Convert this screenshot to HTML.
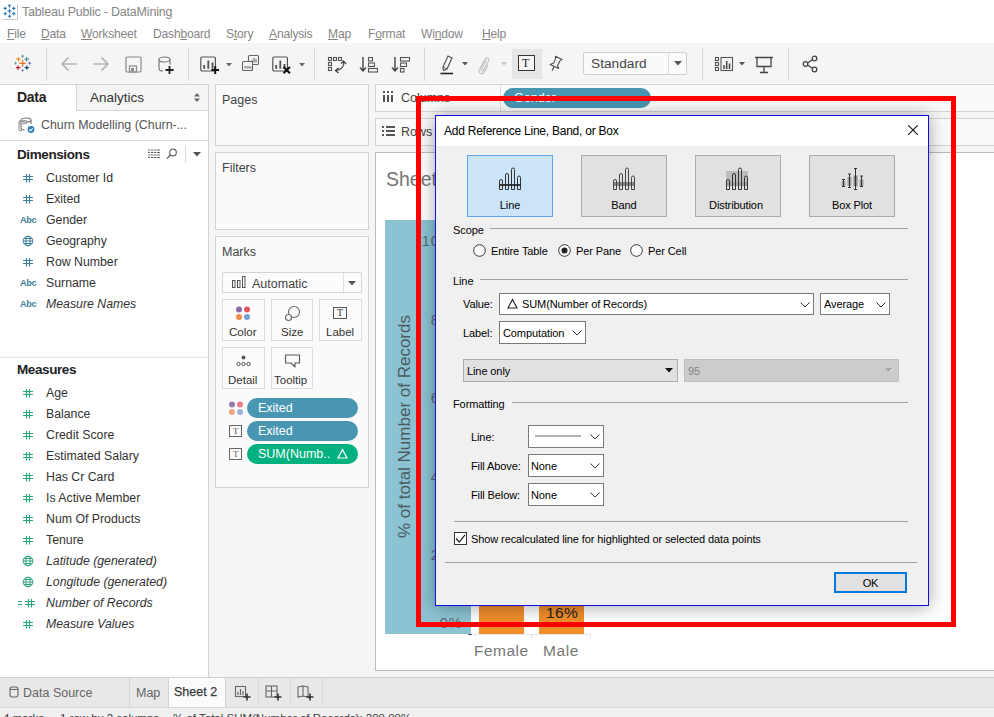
<!DOCTYPE html>
<html><head><meta charset="utf-8">
<style>
*{box-sizing:border-box;margin:0;padding:0}
html,body{width:994px;height:717px;overflow:hidden;background:#fff}
body{font-family:"Liberation Sans",sans-serif;font-size:12px;color:#333;position:relative}
.a{position:absolute}
.t{position:absolute;white-space:nowrap;line-height:1}
.box{position:absolute;background:#fafafa;border:1px solid #d3d3d3}
.menu span{position:absolute;top:28px;font-size:12.1px;color:#868686;line-height:1;letter-spacing:-0.2px}
.menu u{text-decoration:underline;text-underline-offset:1px}
.fld{position:absolute;left:46px;font-size:12.3px;color:#333;line-height:1;white-space:nowrap}
.fld.i{font-style:italic}
.abc{position:absolute;left:20px;font-size:9.2px;font-weight:bold;line-height:1;letter-spacing:-0.35px}
.sep{position:absolute;width:1px;background:#d8d8d8}
.d{position:absolute;white-space:nowrap;line-height:1;font-size:11px;letter-spacing:-0.1px;color:#000}
.cmb{position:absolute;background:#fff;border:1px solid #7a7a7a}
.hr{position:absolute;height:1px;background:#a0a0a0}
.tb{position:absolute;border:1px solid #adadad;background:#e1e1e1}
</style></head><body>
<!-- title bar -->
<svg class="a" style="left:2px;top:3px" width="16" height="17" viewBox="0 0 16 17"><rect x="0" y="0" width="15" height="16" fill="#fff"/><path d="M15.500 1v15.500H1" fill="none" stroke="#c8c8c8" stroke-width="1"/><g fill="none"><path d="M7.5 5.8v4.4M5.3 8h4.4" stroke="#2a78b4" stroke-width="1.2"/><path d="M7.5 1.1999999999999997v3.2M5.9 2.8h3.2" stroke="#2a78b4" stroke-width="1.1"/><path d="M7.5 11.6v3.2M5.9 13.2h3.2" stroke="#2a78b4" stroke-width="1.1"/><path d="M3.2 3.8000000000000003v3.2M1.6 5.4h3.2" stroke="#2a78b4" stroke-width="1.1"/><path d="M11.8 3.8000000000000003v3.2M10.200000000000001 5.4h3.2" stroke="#2a78b4" stroke-width="1.1"/><path d="M3.2 9.0v3.2M1.6 10.6h3.2" stroke="#2a78b4" stroke-width="1.1"/><path d="M11.8 9.0v3.2M10.200000000000001 10.6h3.2" stroke="#2a78b4" stroke-width="1.1"/></g></svg>
<div class="t" style="left:22px;top:6px;font-size:12.5px;color:#858585;letter-spacing:-0.2px">Tableau Public - DataMining</div>
<div class="menu">
<span style="left:7px"><u>F</u>ile</span><span style="left:41px"><u>D</u>ata</span><span style="left:81px"><u>W</u>orksheet</span><span style="left:153px">Dash<u>b</u>oard</span><span style="left:226px">S<u>t</u>ory</span><span style="left:269px"><u>A</u>nalysis</span><span style="left:328px"><u>M</u>ap</span><span style="left:368px">F<u>o</u>rmat</span><span style="left:421px">Wi<u>n</u>dow</span><span style="left:482px"><u>H</u>elp</span>
</div>
<!-- toolbar -->
<div class="a" id="toolbar" style="left:0;top:43px;width:994px;height:41px;background:#f5f5f5"></div>
<div class="sep" style="left:46px;top:47px;height:34px"></div>
<div class="sep" style="left:188px;top:47px;height:34px"></div>
<div class="sep" style="left:314px;top:47px;height:34px"></div>
<div class="sep" style="left:424px;top:47px;height:34px"></div>
<div class="sep" style="left:702px;top:47px;height:34px"></div>
<div class="sep" style="left:788px;top:47px;height:34px"></div>
<!-- tableau logo -->
<svg class="a" style="left:13px;top:54px" width="19" height="19" viewBox="0 0 19 19"><g fill="none"><path d="M9.6 6.1000000000000005v6.6M6.3 9.4h6.6" stroke="#e8762d" stroke-width="1.4"/><path d="M5.4 3.0v4.4M3.2 5.2h4.4" stroke="#eb912c" stroke-width="1.2"/><path d="M13.6 3.0v4.4M11.399999999999999 5.2h4.4" stroke="#59879b" stroke-width="1.2"/><path d="M5.1 11.399999999999999v4.4M2.8999999999999995 13.6h4.4" stroke="#c72037" stroke-width="1.2"/><path d="M13.8 11.399999999999999v4.4M11.600000000000001 13.6h4.4" stroke="#1f457e" stroke-width="1.2"/><path d="M9.6 0.7000000000000002v3.0M8.1 2.2h3.0" stroke="#5b9aa8" stroke-width="1"/><path d="M9.6 14.899999999999999v3.0M8.1 16.4h3.0" stroke="#8a8fc0" stroke-width="1"/><path d="M2.5 7.699999999999999v3.0M1.0 9.2h3.0" stroke="#7a9fb0" stroke-width="1"/><path d="M16.6 7.699999999999999v3.0M15.100000000000001 9.2h3.0" stroke="#6a6fae" stroke-width="1"/></g></svg>
<!-- back/forward -->
<svg class="a" style="left:60px;top:56px" width="18" height="16" viewBox="0 0 18 16"><path d="M16.800 8H2M8.500 1.500L2 8l6.500 6.500" stroke="#b4b4b4" stroke-width="1.700" fill="none"/></svg>
<svg class="a" style="left:92px;top:56px" width="18" height="16" viewBox="0 0 18 16"><path d="M1.200 8H16M9.500 1.500L16 8l-6.500 6.500" stroke="#b4b4b4" stroke-width="1.700" fill="none"/></svg>
<!-- save -->
<svg class="a" style="left:125px;top:56px" width="17" height="17" viewBox="0 0 17 17"><rect x="1" y="1" width="15" height="15" rx="1.200" fill="none" stroke="#8a8a8a" stroke-width="1.200"/><rect x="4.500" y="10" width="7" height="6" fill="none" stroke="#8a8a8a" stroke-width="1.200"/><rect x="6" y="12" width="3" height="3" fill="#8a8a8a"/></svg>
<!-- datasource add -->
<svg class="a" style="left:157px;top:56px" width="18" height="20" viewBox="0 0 18 20"><g fill="none" stroke="#7a7a7a" stroke-width="1.200"><ellipse cx="7.500" cy="3.500" rx="5.500" ry="2.500"/><path d="M2 3.500v9c0 1.500 2 2.500 4 2.500M13 3.500v5"/></g><path d="M12.500 10v8M8.500 14h8" stroke="#222" stroke-width="1.800" fill="none"/></svg>
<!-- new worksheet -->
<svg class="a" style="left:200px;top:55px" width="22" height="20" viewBox="0 0 22 20"><rect x="0.800" y="2" width="14.600" height="14" rx="1.200" fill="none" stroke="#555" stroke-width="1.200"/><path d="M4.200 13.800V10M8.300 13.800V5.500M12.500 13.800V7.500" stroke="#555" stroke-width="1.900" fill="none"/><path d="M15.200 11.300v7.600M11.400 15.100h7.600" stroke="#111" stroke-width="2" fill="none"/></svg>
<svg class="a" style="left:226px;top:63px" width="6" height="4" viewBox="0 0 6 4"><path d="M0 0h6L3 3.500z" fill="#6a6a6a"/></svg>
<!-- duplicate -->
<svg class="a" style="left:241px;top:54px" width="20" height="20" viewBox="0 0 20 20"><rect x="7.500" y="1.500" width="10" height="9" rx="1" fill="#f5f5f5" stroke="#666" stroke-width="1.100"/><path d="M11 8.500V6M13 8.500V4M15 8.500V5" stroke="#666" stroke-width="1.100"/><rect x="1.500" y="7.500" width="10" height="9" rx="1" fill="#f5f5f5" stroke="#666" stroke-width="1.100"/><path d="M4 14.500v-2.500M6 14.500v-2.500M8 14.500v-2.500M9.800 14.500v-2" stroke="#666" stroke-width="1"/></svg>
<!-- clear -->
<svg class="a" style="left:272px;top:55px" width="22" height="20" viewBox="0 0 22 20"><rect x="0.800" y="2" width="14.600" height="14" rx="1.200" fill="none" stroke="#555" stroke-width="1.200"/><path d="M4.200 13.800V10M8.300 13.800V5.500M12.500 13.800V9" stroke="#555" stroke-width="1.900" fill="none"/><path d="M11.500 11.900l6.400 6.400M17.900 11.900l-6.400 6.400" stroke="#111" stroke-width="2.100" fill="none"/></svg>
<svg class="a" style="left:299px;top:63px" width="6" height="4" viewBox="0 0 6 4"><path d="M0 0h6L3 3.500z" fill="#6a6a6a"/></svg>
<!-- swap -->
<svg class="a" style="left:327px;top:55px" width="20" height="20" viewBox="0 0 20 20"><g fill="none" stroke="#555" stroke-width="1.100"><rect x="1.500" y="2.500" width="3" height="3"/><rect x="6.500" y="2.500" width="3" height="3"/><rect x="11.500" y="2.500" width="3" height="3"/><rect x="1.500" y="7.500" width="3" height="3"/><rect x="1.500" y="12.500" width="3" height="3"/><path d="M16.500 7c1 4-2 8-7.500 8.500" stroke-width="1.300"/></g><path d="M14 8.500l2.500-2.500 2.500 3M11.500 13l-3 2.500 3 2.500" fill="none" stroke="#444" stroke-width="1.300"/></svg>
<!-- sort asc -->
<svg class="a" style="left:359px;top:55px" width="20" height="20" viewBox="0 0 20 20"><path d="M4 2v14M1 12.500l3 3.500 3-3.500" fill="none" stroke="#444" stroke-width="1.400"/><g fill="none" stroke="#555" stroke-width="1.100"><rect x="9.500" y="2.500" width="4" height="3.500"/><rect x="9.500" y="8" width="6" height="3.500"/><rect x="9.500" y="13.500" width="9" height="3.500"/></g></svg>
<!-- sort desc -->
<svg class="a" style="left:391px;top:55px" width="20" height="20" viewBox="0 0 20 20"><path d="M4 2v14M1 12.500l3 3.500 3-3.500" fill="none" stroke="#444" stroke-width="1.400"/><g fill="none" stroke="#555" stroke-width="1.100"><rect x="9.500" y="2.500" width="9" height="3.500"/><rect x="9.500" y="8" width="6" height="3.500"/><rect x="9.500" y="13.500" width="3.500" height="3.500"/></g></svg>
<!-- highlighter -->
<svg class="a" style="left:439px;top:54px" width="16" height="22" viewBox="0 0 16 22"><path d="M9 2l4 2-5 11-3.500 1.500-0.500-3.500z" fill="none" stroke="#555" stroke-width="1.200"/><path d="M4.500 13l3.500 2" stroke="#555" stroke-width="1" fill="none"/><path d="M1.500 19.500h12.500" stroke="#222" stroke-width="1.600"/></svg>
<svg class="a" style="left:462px;top:62px" width="6" height="4" viewBox="0 0 6 4"><path d="M0 0h6L3 3.500z" fill="#555"/></svg>
<!-- paperclip -->
<svg class="a" style="left:476px;top:55px" width="16" height="20" viewBox="0 0 16 20"><path d="M10.500 5L5.500 14c-.8 1.500 1.200 2.600 2 1.200L12.500 6c1.300-2.400-2-4.200-3.300-1.900L3.500 14.500c-1.800 3.400 2.800 5.800 4.600 2.600L12 10" fill="none" stroke="#c4c4c4" stroke-width="1.200"/></svg>
<svg class="a" style="left:501px;top:62px" width="6" height="4" viewBox="0 0 6 4"><path d="M0 0h6L3 3.500z" fill="#c4c4c4"/></svg>
<!-- T label button -->
<div class="a" style="left:512px;top:49px;width:30px;height:30px;background:#e6e6e6"></div>
<div class="a" style="left:518px;top:55px;width:17px;height:16px;border:1.500px solid #333;background:#f5f5f5"></div>
<div class="t" style="left:522px;top:57px;font-family:'Liberation Serif',serif;font-size:12px;color:#222">T</div>
<!-- pin -->
<svg class="a" style="left:549px;top:54px" width="16" height="20" viewBox="0 0 16 20"><path d="M6.400 2.300L13.100 5.400L10.900 6.900L8.600 11.600L9.600 14.500L1.200 10.400L4.700 9.100L6.600 4.600z" fill="none" stroke="#4a4a4a" stroke-width="1.100" stroke-linejoin="round"/><path d="M5.100 12.400L3.300 16.500" stroke="#4a4a4a" stroke-width="1.300"/></svg>
<!-- Standard dropdown -->
<div class="a" style="left:583px;top:52px;width:104px;height:23px;background:#fafafa;border:1px solid #d0d0d0;border-radius:2px"></div>
<div class="a" style="left:668px;top:53px;width:1px;height:21px;background:#dcdcdc"></div>
<div class="t" style="left:591px;top:57px;font-size:13.7px;color:#444">Standard</div>
<svg class="a" style="left:674px;top:61px" width="8" height="5" viewBox="0 0 8 5"><path d="M0 0h8L4 4.500z" fill="#555"/></svg>
<!-- show me cards -->
<svg class="a" style="left:714px;top:56px" width="20" height="18" viewBox="0 0 20 18"><g fill="none" stroke="#555" stroke-width="1.100"><rect x="1.500" y="1.500" width="3" height="3"/><rect x="1.500" y="6.500" width="3" height="3"/><rect x="1.500" y="11.500" width="3" height="3"/><rect x="7" y="1.500" width="11.500" height="13"/></g><path d="M10 13V9M12.700 13V5M15.500 13V7.500" stroke="#444" stroke-width="1.500"/></svg>
<svg class="a" style="left:739px;top:62px" width="6" height="4" viewBox="0 0 6 4"><path d="M0 0h6L3 3.500z" fill="#555"/></svg>
<!-- presentation -->
<svg class="a" style="left:754px;top:55px" width="20" height="20" viewBox="0 0 20 20"><path d="M1 2.500h18M3 2.500v9h14v-9M10 11.500v5.500M6 17.500h8" fill="none" stroke="#444" stroke-width="1.300"/></svg>
<!-- share -->
<svg class="a" style="left:802px;top:55px" width="18" height="18" viewBox="0 0 18 18"><g fill="none" stroke="#444" stroke-width="1.300"><circle cx="12.500" cy="3.500" r="2.300"/><circle cx="3.500" cy="9" r="2.300"/><circle cx="12.500" cy="14.500" r="2.300"/><path d="M5.500 8l5-3.300M5.500 10l5 3.300"/></g></svg>
<!-- main bg -->
<div class="a" style="left:0;top:84px;width:994px;height:593px;background:#f5f5f5"></div>
<!-- left pane -->
<div class="a" id="leftpane" style="left:0;top:84px;width:209px;height:593px;background:#fff;border-right:1px solid #d3d3d3;border-top:1px solid #d3d3d3"></div>
<div class="a" style="left:76px;top:84px;width:132px;height:27px;background:#f5f5f5;border-left:1px solid #d3d3d3;border-bottom:1px solid #d3d3d3;border-top:1px solid #d3d3d3"></div>
<div class="t" style="left:17px;top:90px;font-size:14px;color:#222;font-weight:bold;letter-spacing:-0.3px">Data</div>
<div class="t" style="left:90px;top:90.7px;font-size:13.5px;color:#333">Analytics</div>
<svg class="a" style="left:194px;top:93px" width="6" height="9" viewBox="0 0 6 9"><path d="M0 3.500L3 0l3 3.500zM0 5.500L3 9l3-3.500z" fill="#666"/></svg>
<div class="a" style="left:0;top:140px;width:208px;height:1px;background:#dcdcdc"></div>
<!-- datasource icon -->
<svg class="a" style="left:18px;top:117px" width="18" height="17" viewBox="0 0 18 17"><g fill="none" stroke="#777" stroke-width="1.100"><ellipse cx="8" cy="3" rx="5" ry="2"/><path d="M3 3v8c0 1 1.500 1.800 3.500 2M13 3v4"/><ellipse cx="5" cy="5" rx="4" ry="1.800" stroke="#999"/><path d="M1 5v7c0 1 1.500 1.800 3 2" stroke="#999"/></g><circle cx="13" cy="12.500" r="3.400" fill="#2f7fb5"/><path d="M11.300 12.500l1.300 1.300 2.100-2.500" stroke="#fff" stroke-width="1.100" fill="none"/></svg>
<div class="t" style="left:41px;top:119px;font-size:12.4px;color:#555">Churn Modelling (Churn-...</div>
<div class="t" style="left:17px;top:147.7px;font-size:13.5px;color:#222;font-weight:bold;letter-spacing:-0.4px">Dimensions</div>
<!-- dim header icons -->
<svg class="a" style="left:148px;top:149px" width="12" height="10" viewBox="0 0 12 10"><path d="M0 1h2M3 1h9M0 3.500h2M3 3.500h9M0 6h2M3 6h9M0 8.500h2M3 8.500h9" stroke="#666" stroke-width="1.100"/><path d="M5.500 0v10M8.500 0v10" stroke="#fff" stroke-width="0.700"/></svg>
<svg class="a" style="left:166px;top:148px" width="12" height="12" viewBox="0 0 12 12"><circle cx="7" cy="4.500" r="3.300" fill="none" stroke="#666" stroke-width="1.200"/><path d="M4.500 7L1 10.500" stroke="#666" stroke-width="1.400"/></svg>
<div class="sep" style="left:185px;top:145px;height:18px"></div>
<svg class="a" style="left:193px;top:152px" width="8" height="5" viewBox="0 0 8 5"><path d="M0 0h8L4 4.500z" fill="#555"/></svg>
<div class="a" style="left:0;top:357px;width:208px;height:1px;background:#e4e4e4"></div>
<div class="t" style="left:17px;top:362.7px;font-size:13.5px;color:#222;font-weight:bold;letter-spacing:-0.4px">Measures</div>
<svg class="a" style="left:23px;top:173px" width="10" height="10" viewBox="0 0 10 10"><path d="M3.5 1v8.5M6.5 1v8.5M0 3.5h10M0 6.5h10" stroke="#3f7f9c" stroke-width="1.2" fill="none"/></svg><div class="fld" style="top:172px">Customer Id</div>
<svg class="a" style="left:23px;top:194px" width="10" height="10" viewBox="0 0 10 10"><path d="M3.5 1v8.5M6.5 1v8.5M0 3.5h10M0 6.5h10" stroke="#3f7f9c" stroke-width="1.2" fill="none"/></svg><div class="fld" style="top:193px">Exited</div>
<div class="abc" style="top:216px;color:#3f7f9c">Abc</div><div class="fld" style="top:214px">Gender</div>
<svg class="a" style="left:22px;top:235px" width="12" height="12" viewBox="0 0 12 12"><g stroke="#3f7f9c" stroke-width="1" fill="none"><circle cx="6" cy="6" r="4.8"/><ellipse cx="6" cy="6" rx="2.2" ry="4.8"/><path d="M1.2 6h9.6M2 3.5h8M2 8.5h8"/></g></svg><div class="fld" style="top:235px">Geography</div>
<svg class="a" style="left:23px;top:257px" width="10" height="10" viewBox="0 0 10 10"><path d="M3.5 1v8.5M6.5 1v8.5M0 3.5h10M0 6.5h10" stroke="#3f7f9c" stroke-width="1.2" fill="none"/></svg><div class="fld" style="top:256px">Row Number</div>
<div class="abc" style="top:279px;color:#3f7f9c">Abc</div><div class="fld" style="top:277px">Surname</div>
<div class="abc" style="top:300px;color:#3f7f9c">Abc</div><div class="fld i" style="top:298px">Measure Names</div>
<svg class="a" style="left:23px;top:388px" width="10" height="10" viewBox="0 0 10 10"><path d="M3.5 1v8.5M6.5 1v8.5M0 3.5h10M0 6.5h10" stroke="#2fa37a" stroke-width="1.2" fill="none"/></svg><div class="fld" style="top:387px">Age</div>
<svg class="a" style="left:23px;top:409px" width="10" height="10" viewBox="0 0 10 10"><path d="M3.5 1v8.5M6.5 1v8.5M0 3.5h10M0 6.5h10" stroke="#2fa37a" stroke-width="1.2" fill="none"/></svg><div class="fld" style="top:408px">Balance</div>
<svg class="a" style="left:23px;top:430px" width="10" height="10" viewBox="0 0 10 10"><path d="M3.5 1v8.5M6.5 1v8.5M0 3.5h10M0 6.5h10" stroke="#2fa37a" stroke-width="1.2" fill="none"/></svg><div class="fld" style="top:429px">Credit Score</div>
<svg class="a" style="left:23px;top:451px" width="10" height="10" viewBox="0 0 10 10"><path d="M3.5 1v8.5M6.5 1v8.5M0 3.5h10M0 6.5h10" stroke="#2fa37a" stroke-width="1.2" fill="none"/></svg><div class="fld" style="top:450px">Estimated Salary</div>
<svg class="a" style="left:23px;top:472px" width="10" height="10" viewBox="0 0 10 10"><path d="M3.5 1v8.5M6.5 1v8.5M0 3.5h10M0 6.5h10" stroke="#2fa37a" stroke-width="1.2" fill="none"/></svg><div class="fld" style="top:471px">Has Cr Card</div>
<svg class="a" style="left:23px;top:493px" width="10" height="10" viewBox="0 0 10 10"><path d="M3.5 1v8.5M6.5 1v8.5M0 3.5h10M0 6.5h10" stroke="#2fa37a" stroke-width="1.2" fill="none"/></svg><div class="fld" style="top:492px">Is Active Member</div>
<svg class="a" style="left:23px;top:514px" width="10" height="10" viewBox="0 0 10 10"><path d="M3.5 1v8.5M6.5 1v8.5M0 3.5h10M0 6.5h10" stroke="#2fa37a" stroke-width="1.2" fill="none"/></svg><div class="fld" style="top:513px">Num Of Products</div>
<svg class="a" style="left:23px;top:535px" width="10" height="10" viewBox="0 0 10 10"><path d="M3.5 1v8.5M6.5 1v8.5M0 3.5h10M0 6.5h10" stroke="#2fa37a" stroke-width="1.2" fill="none"/></svg><div class="fld" style="top:534px">Tenure</div>
<svg class="a" style="left:22px;top:555px" width="12" height="12" viewBox="0 0 12 12"><g stroke="#2fa37a" stroke-width="1" fill="none"><circle cx="6" cy="6" r="4.8"/><ellipse cx="6" cy="6" rx="2.2" ry="4.8"/><path d="M1.2 6h9.6M2 3.5h8M2 8.5h8"/></g></svg><div class="fld i" style="top:555px">Latitude (generated)</div>
<svg class="a" style="left:22px;top:576px" width="12" height="12" viewBox="0 0 12 12"><g stroke="#2fa37a" stroke-width="1" fill="none"><circle cx="6" cy="6" r="4.8"/><ellipse cx="6" cy="6" rx="2.2" ry="4.8"/><path d="M1.2 6h9.6M2 3.5h8M2 8.5h8"/></g></svg><div class="fld i" style="top:576px">Longitude (generated)</div>
<svg class="a" style="left:25px;top:598px" width="10" height="10" viewBox="0 0 10 10"><path d="M3.5 1v8.5M6.5 1v8.5M0 3.5h10M0 6.5h10" stroke="#2fa37a" stroke-width="1.2" fill="none"/></svg><div class="a" style="left:18px;top:601px;width:4px;height:1px;background:#2fa37a"></div><div class="a" style="left:18px;top:604px;width:4px;height:1px;background:#2fa37a"></div><div class="fld i" style="top:597px">Number of Records</div>
<svg class="a" style="left:23px;top:619px" width="10" height="10" viewBox="0 0 10 10"><path d="M3.5 1v8.5M6.5 1v8.5M0 3.5h10M0 6.5h10" stroke="#2fa37a" stroke-width="1.2" fill="none"/></svg><div class="fld i" style="top:618px">Measure Values</div>
<!-- cards -->
<div class="box" style="left:215px;top:84px;width:154px;height:62px"></div>
<div class="t" style="left:222px;top:94px;font-size:12.5px;color:#444">Pages</div>
<div class="box" style="left:215px;top:152px;width:154px;height:78px"></div>
<div class="t" style="left:222px;top:162px;font-size:12.5px;color:#444">Filters</div>
<div class="box" id="marks" style="left:215px;top:236px;width:154px;height:252px"></div>
<div class="t" style="left:222px;top:246px;font-size:12.5px;color:#444">Marks</div>
<!-- marks type dropdown -->
<div class="a" style="left:222px;top:272px;width:140px;height:21px;background:#fcfcfc;border:1px solid #d4d4d4;border-radius:1px"></div>
<div class="a" style="left:343px;top:273px;width:1px;height:19px;background:#e0e0e0"></div>
<svg class="a" style="left:232px;top:276px" width="14" height="12" viewBox="0 0 14 12"><g fill="none" stroke="#555" stroke-width="1"><rect x="0.5" y="4.500" width="2.500" height="7"/><rect x="5.500" y="4.500" width="2.500" height="7"/><rect x="10.500" y="0.500" width="2.500" height="11"/></g></svg>
<div class="t" style="left:252px;top:278px;font-size:12.5px;color:#444">Automatic</div>
<svg class="a" style="left:348px;top:281px" width="8" height="5" viewBox="0 0 8 5"><path d="M0 0h8L4 4.500z" fill="#555"/></svg>
<!-- marks buttons -->
<div class="a" style="left:222px;top:299px;width:43px;height:42px;background:#fcfcfc;border:1px solid #dcdcdc"></div>
<div class="a" style="left:271px;top:299px;width:42px;height:42px;background:#fcfcfc;border:1px solid #dcdcdc"></div>
<div class="a" style="left:319px;top:299px;width:43px;height:42px;background:#fcfcfc;border:1px solid #dcdcdc"></div>
<div class="a" style="left:222px;top:347px;width:43px;height:42px;background:#fcfcfc;border:1px solid #dcdcdc"></div>
<div class="a" style="left:271px;top:347px;width:42px;height:42px;background:#fcfcfc;border:1px solid #dcdcdc"></div>
<svg class="a" style="left:235px;top:306px" width="16" height="15" viewBox="0 0 16 15"><circle cx="4" cy="3.500" r="3" fill="#8b6aa8"/><circle cx="12" cy="3.500" r="3" fill="#e15759"/><circle cx="4" cy="11" r="3" fill="#f28e4b"/><circle cx="12" cy="11" r="3" fill="#7aa0d0"/></svg>
<div class="t" style="left:229px;top:327px;font-size:11.5px;color:#333">Color</div>
<svg class="a" style="left:284px;top:305px" width="17" height="17" viewBox="0 0 17 17"><circle cx="10" cy="7" r="5.500" fill="none" stroke="#666" stroke-width="1.100"/><circle cx="4.500" cy="12.500" r="3" fill="#fcfcfc" stroke="#666" stroke-width="1.100"/></svg>
<div class="t" style="left:281px;top:327px;font-size:11.5px;color:#333">Size</div>
<div class="a" style="left:333px;top:307px;width:14px;height:12px;border:1px solid #555"></div>
<div class="t" style="left:337px;top:308px;font-family:'Liberation Serif',serif;font-size:10px;color:#333">T</div>
<div class="t" style="left:326px;top:327px;font-size:11.5px;color:#333">Label</div>
<svg class="a" style="left:236px;top:355px" width="15" height="12" viewBox="0 0 15 12"><circle cx="7.500" cy="2.500" r="1.900" fill="#555"/><g fill="none" stroke="#555" stroke-width="1"><circle cx="2.500" cy="9" r="1.700"/><circle cx="7.500" cy="9" r="1.700"/><circle cx="12.500" cy="9" r="1.700"/></g></svg>
<div class="t" style="left:228px;top:375px;font-size:11.5px;color:#333">Detail</div>
<svg class="a" style="left:284px;top:354px" width="17" height="14" viewBox="0 0 17 14"><path d="M1.500 1h14v8h-4.500v4l-4-4h-5.500z" fill="none" stroke="#555" stroke-width="1.100" stroke-linejoin="round"/></svg>
<div class="t" style="left:274px;top:375px;font-size:11.5px;color:#333">Tooltip</div>
<!-- marks pills -->
<svg class="a" style="left:228px;top:401px" width="16" height="15" viewBox="0 0 16 15"><circle cx="4" cy="3.500" r="3" fill="#957fae"/><circle cx="12" cy="3.500" r="3" fill="#ee7d8e"/><circle cx="4" cy="11" r="3" fill="#f2a77c"/><circle cx="12" cy="11" r="3" fill="#9ab3d6"/></svg>
<div class="a" style="left:247px;top:398px;width:111px;height:20px;background:#4996b2;border-radius:10px"></div>
<div class="t" style="left:258px;top:402px;font-size:12.5px;color:#fff">Exited</div>
<div class="a" style="left:229px;top:425px;width:13px;height:12px;border:1px solid #666"></div>
<div class="t" style="left:233px;top:427px;font-family:'Liberation Serif',serif;font-size:9px;color:#555">T</div>
<div class="a" style="left:247px;top:421px;width:111px;height:20px;background:#4996b2;border-radius:10px"></div>
<div class="t" style="left:258px;top:425px;font-size:12.5px;color:#fff">Exited</div>
<div class="a" style="left:229px;top:448px;width:13px;height:12px;border:1px solid #666"></div>
<div class="t" style="left:233px;top:450px;font-family:'Liberation Serif',serif;font-size:9px;color:#555">T</div>
<div class="a" style="left:247px;top:444px;width:111px;height:20px;background:#00b180;border-radius:10px"></div>
<div class="t" style="left:258px;top:448px;font-size:12.5px;color:#fff">SUM(Numb..</div>
<svg class="a" style="left:337px;top:448px" width="11" height="11" viewBox="0 0 11 11"><path d="M5.500 1.500L10 10H1z" fill="none" stroke="#fff" stroke-width="1.200"/></svg>
<!-- shelves -->
<div class="box" style="left:375px;top:84px;width:625px;height:28px"></div>
<div class="box" style="left:375px;top:118px;width:625px;height:28px"></div>
<div class="a" style="left:383px;top:95px;width:2px;height:7px;background:#555;box-shadow:4px 0 0 #555,8px 0 0 #555"></div>
<div class="a" style="left:383px;top:91px;width:2px;height:2px;background:#555;box-shadow:4px 0 0 #555,8px 0 0 #555"></div>
<div class="a" style="left:382px;top:126px;width:2px;height:2px;background:#555;box-shadow:0 4px 0 #555,0 8px 0 #555"></div>
<div class="a" style="left:386px;top:126px;width:9px;height:2px;background:#555;box-shadow:0 4px 0 #555,0 8px 0 #555"></div>
<div class="t" style="left:401px;top:92px;font-size:12.5px;color:#444">Columns</div>
<div class="t" style="left:401px;top:126px;font-size:12.5px;color:#444">Rows</div>
<div class="a" style="left:500px;top:85px;width:1px;height:26px;background:#dcdcdc"></div>
<div class="a" style="left:503px;top:88px;width:148px;height:20px;background:#4996b2;border-radius:10px"></div>
<div class="t" style="left:514px;top:92px;font-size:12.5px;color:#fff">Gender</div>
<!-- view -->
<div class="a" id="view" style="left:375px;top:152px;width:625px;height:519px;background:#fff;border:1px solid #bcbcbc"></div>
<div class="t" style="left:386px;top:169.5px;font-size:19.5px;color:#757575">Sheet 2</div>
<div class="a" style="left:385px;top:220px;width:86px;height:414px;background:#8cc3d3"></div>
<div class="a" style="left:479px;top:240px;width:45px;height:394px;background:#f28e2b"></div>
<div class="a" style="left:539px;top:240px;width:45px;height:394px;background:#f28e2b"></div>
<div class="a" style="left:471px;top:634px;width:120px;height:1px;background:#e6e6e6"></div>
<div class="a" style="left:531px;top:635px;width:1px;height:4px;background:#e0e0e0"></div>
<div class="a" style="left:590px;top:635px;width:1px;height:4px;background:#e0e0e0"></div>
<div class="t" style="left:474px;top:643px;font-size:15.5px;color:#777;letter-spacing:0.5px">Female</div>
<div class="t" style="left:543px;top:643px;font-size:15.5px;color:#777;letter-spacing:0.6px">Male</div>
<div class="t" style="left:541px;top:605px;width:42px;text-align:center;font-size:15.5px;color:#222;letter-spacing:0.4px">16%</div>
<div class="t" style="left:396px;top:538px;font-size:17px;color:#4a5a60;transform:rotate(-90deg);transform-origin:0 0;width:220px">% of total Number of Records</div>
<div class="t" style="left:415.5px;top:234px;width:47px;text-align:right;font-size:14.5px;letter-spacing:0.9px;color:#5a6a70">100%</div>
<div class="t" style="left:415.5px;top:313px;width:47px;text-align:right;font-size:14.5px;letter-spacing:0.9px;color:#5a6a70">80%</div>
<div class="t" style="left:415.5px;top:391px;width:47px;text-align:right;font-size:14.5px;letter-spacing:0.9px;color:#5a6a70">60%</div>
<div class="t" style="left:415.5px;top:470px;width:47px;text-align:right;font-size:14.5px;letter-spacing:0.9px;color:#5a6a70">40%</div>
<div class="t" style="left:415.5px;top:548px;width:47px;text-align:right;font-size:14.5px;letter-spacing:0.9px;color:#5a6a70">20%</div>
<div class="t" style="left:415.5px;top:616px;width:47px;text-align:right;font-size:14.5px;letter-spacing:0.9px;color:#5a6a70">0%</div>
<div class="a" style="left:468px;top:634px;width:4px;height:1px;background:#555"></div>
<!-- dialog -->
<div class="a" id="dlg" style="left:435px;top:115px;width:494px;height:491px;background:#f0f0f0;border:1px solid #1010e6;box-shadow:0 1px 17px rgba(0,0,0,0.36)"></div>
<div class="a" style="left:436px;top:116px;width:492px;height:30px;background:#fff"></div>
<div class="d" style="left:444px;top:125px;font-size:12px;letter-spacing:-0.24px">Add Reference Line, Band, or Box</div>
<svg class="a" style="left:908px;top:125px" width="10" height="10" viewBox="0 0 10 10"><path d="M0.300 0.300l9.400 9.400M9.700 0.300l-9.400 9.400" stroke="#111" stroke-width="1.100"/></svg>
<!-- type buttons -->
<div class="tb" style="left:467px;top:155px;width:86px;height:62px;background:#cce4f7;border-color:#5aa7ee"></div>
<div class="tb" style="left:581px;top:155px;width:86px;height:62px"></div>
<div class="tb" style="left:695px;top:155px;width:86px;height:62px"></div>
<div class="tb" style="left:809px;top:155px;width:86px;height:62px"></div>
<div class="d" style="left:467px;top:200px;width:86px;text-align:center">Line</div>
<div class="d" style="left:581px;top:200px;width:86px;text-align:center">Band</div>
<div class="d" style="left:693px;top:200px;width:86px;text-align:center">Distribution</div>
<div class="d" style="left:809px;top:200px;width:86px;text-align:center">Box Plot</div>
<!-- icons -->
<svg class="a" style="left:498px;top:166px" width="24" height="25" viewBox="0 0 24 25"><path d="M1.5 23.5V15.0a1.5 1.5 0 0 1 3 0V23.5zM7.5 23.5V9.0a1.5 1.5 0 0 1 3 0V23.5zM13.5 23.5V3.5a1.5 1.5 0 0 1 3 0V23.5zM19.5 23.5V11.5a1.5 1.5 0 0 1 3 0V23.5z" fill="none" stroke="#333" stroke-width="1"/><path d="M1 19h21.500" stroke="#222" stroke-width="1.700"/></svg>
<svg class="a" style="left:612px;top:166px" width="24" height="25" viewBox="0 0 24 25"><rect x="1" y="16" width="22" height="4" fill="#868686"/><path d="M1.5 23.5V15.0a1.5 1.5 0 0 1 3 0V23.5zM7.5 23.5V9.0a1.5 1.5 0 0 1 3 0V23.5zM13.5 23.5V3.5a1.5 1.5 0 0 1 3 0V23.5zM19.5 23.5V11.5a1.5 1.5 0 0 1 3 0V23.5z" fill="none" stroke="#444" stroke-width="1"/></svg>
<svg class="a" style="left:725px;top:166px" width="24" height="25" viewBox="0 0 24 25"><rect x="1" y="5" width="22" height="11" fill="#bcbcbc"/><rect x="1" y="16" width="22" height="4" fill="#a2a2a2"/><path d="M1.5 23.5V15.0a1.5 1.5 0 0 1 3 0V23.5zM7.5 23.5V9.0a1.5 1.5 0 0 1 3 0V23.5zM13.5 23.5V3.5a1.5 1.5 0 0 1 3 0V23.5zM19.5 23.5V11.5a1.5 1.5 0 0 1 3 0V23.5z" fill="none" stroke="#333" stroke-width="1"/></svg>
<svg class="a" style="left:840px;top:166px" width="24" height="25" viewBox="0 0 24 25"><g fill="#a2a2a2"><rect x="1.500" y="15" width="4" height="5"/><rect x="7.500" y="11" width="4" height="9"/><rect x="19.500" y="13.500" width="4" height="6.500"/></g><rect x="13.500" y="9.500" width="4" height="11" fill="#8a8a8a"/><path d="M3.5 13.500v7M2 13.500h3M2 20.500h3M9.500 8v13.500M8 8h3M8 21.500h3M15.500 2.500v21M14 2.500h3M14 23.500h3M21.500 10v10.500M20 10h3M20 20.500h3" stroke="#333" stroke-width="1" fill="none"/></svg>
<!-- Scope -->
<div class="d" style="left:453px;top:225px">Scope</div>
<div class="hr" style="left:490px;top:228px;width:418px"></div>
<svg class="a" style="left:473px;top:244px" width="13" height="13" viewBox="0 0 13 13"><circle cx="6.500" cy="6.500" r="5.800" fill="#fff" stroke="#333" stroke-width="1"/></svg>
<div class="d" style="left:491px;top:246px">Entire Table</div>
<svg class="a" style="left:558px;top:244px" width="13" height="13" viewBox="0 0 13 13"><circle cx="6.500" cy="6.500" r="5.800" fill="#fff" stroke="#333" stroke-width="1"/><circle cx="6.500" cy="6.500" r="3" fill="#222"/></svg>
<div class="d" style="left:576px;top:246px">Per Pane</div>
<svg class="a" style="left:630px;top:244px" width="13" height="13" viewBox="0 0 13 13"><circle cx="6.500" cy="6.500" r="5.800" fill="#fff" stroke="#333" stroke-width="1"/></svg>
<div class="d" style="left:648px;top:246px">Per Cell</div>
<!-- Line -->
<div class="d" style="left:453px;top:276px">Line</div>
<div class="hr" style="left:480px;top:279px;width:428px"></div>
<div class="d" style="left:463px;top:299px">Value:</div>
<div class="cmb" style="left:499px;top:293px;width:315px;height:22px"></div>
<svg class="a" style="left:507px;top:298px" width="11" height="11" viewBox="0 0 11 11"><path d="M5.500 1.500L10 10H1z" fill="none" stroke="#222" stroke-width="1.100"/></svg>
<div class="d" style="left:522px;top:299px">SUM(Number of Records)</div>
<svg class="a" style="left:800px;top:302px" width="10" height="6" viewBox="0 0 10 6"><path d="M0.500 0.500L5 5l4.500-4.500" fill="none" stroke="#333" stroke-width="1"/></svg>
<div class="cmb" style="left:820px;top:293px;width:70px;height:22px"></div>
<div class="d" style="left:824px;top:299px">Average</div>
<svg class="a" style="left:876px;top:302px" width="10" height="6" viewBox="0 0 10 6"><path d="M0.500 0.500L5 5l4.500-4.500" fill="none" stroke="#333" stroke-width="1"/></svg>
<div class="d" style="left:463px;top:328px">Label:</div>
<div class="cmb" style="left:499px;top:321px;width:87px;height:23px"></div>
<div class="d" style="left:503px;top:328px">Computation</div>
<svg class="a" style="left:572px;top:330px" width="10" height="6" viewBox="0 0 10 6"><path d="M0.500 0.500L5 5l4.500-4.500" fill="none" stroke="#333" stroke-width="1"/></svg>
<div class="a" style="left:463px;top:359px;width:215px;height:23px;background:#e1e1e1;border:1px solid #adadad"></div>
<div class="d" style="left:467px;top:366px">Line only</div>
<svg class="a" style="left:665px;top:368px" width="8" height="5" viewBox="0 0 8 5"><path d="M0 0h8L4 4.500z" fill="#111"/></svg>
<div class="a" style="left:684px;top:359px;width:215px;height:23px;background:#cccccc;border:1px solid #bfbfbf"></div>
<div class="d" style="left:688px;top:366px;color:#838383">95</div>
<svg class="a" style="left:885px;top:368px" width="8" height="5" viewBox="0 0 8 5"><path d="M0 0h8L4 4.500z" fill="#a8a8a8"/><path d="M4 4.500L8 0.500" stroke="#fff" stroke-width="1"/></svg>
<!-- Formatting -->
<div class="d" style="left:453px;top:399px">Formatting</div>
<div class="hr" style="left:512px;top:402px;width:396px"></div>
<div class="d" style="left:471px;top:432px">Line:</div>
<div class="cmb" style="left:528px;top:425px;width:76px;height:23px"></div>
<div class="a" style="left:535px;top:435px;width:46px;height:2px;background:#b2b2b2"></div>
<svg class="a" style="left:590px;top:434px" width="10" height="6" viewBox="0 0 10 6"><path d="M0.500 0.500L5 5l4.500-4.500" fill="none" stroke="#333" stroke-width="1"/></svg>
<div class="d" style="left:471px;top:461px">Fill Above:</div>
<div class="cmb" style="left:528px;top:454px;width:76px;height:23px"></div>
<div class="d" style="left:531px;top:461px">None</div>
<svg class="a" style="left:590px;top:463px" width="10" height="6" viewBox="0 0 10 6"><path d="M0.500 0.500L5 5l4.500-4.500" fill="none" stroke="#333" stroke-width="1"/></svg>
<div class="d" style="left:471px;top:490px">Fill Below:</div>
<div class="cmb" style="left:528px;top:483px;width:76px;height:23px"></div>
<div class="d" style="left:531px;top:490px">None</div>
<svg class="a" style="left:590px;top:492px" width="10" height="6" viewBox="0 0 10 6"><path d="M0.500 0.500L5 5l4.500-4.500" fill="none" stroke="#333" stroke-width="1"/></svg>
<div class="hr" style="left:454px;top:521px;width:454px"></div>
<div class="a" style="left:454px;top:532px;width:13px;height:13px;background:#fff;border:1px solid #333"></div>
<svg class="a" style="left:455px;top:533px" width="11" height="11" viewBox="0 0 11 11"><path d="M1 5.500L4.300 9L10 1.800" fill="none" stroke="#222" stroke-width="1.200"/></svg>
<div class="d" style="left:471px;top:534px">Show recalculated line for highlighted or selected data points</div>
<div class="hr" style="left:445px;top:562px;width:472px"></div>
<div class="a" style="left:834px;top:572px;width:73px;height:21px;background:#e1e1e1;border:2px solid #0078d7"></div>
<div class="d" style="left:834px;top:578px;width:73px;text-align:center">OK</div>
<!-- red rect -->
<div class="a" style="left:416px;top:96px;width:540px;height:531px;border:5px solid #fe0000"></div>
<!-- bottom -->
<div class="a" id="bottombar" style="left:0;top:677px;width:994px;height:30px;background:#e8e8e8;border-top:1px solid #d0d0d0"></div>
<div class="a" style="left:129px;top:678px;width:1px;height:29px;background:#d4d4d4"></div>
<div class="a" style="left:168px;top:678px;width:58px;height:29px;background:#fbfbfb;border-left:1px solid #d4d4d4;border-right:1px solid #d4d4d4"></div>
<svg class="a" style="left:9px;top:686px" width="10" height="12" viewBox="0 0 10 12"><rect x="1" y="1" width="8" height="10" rx="2.500" fill="none" stroke="#666" stroke-width="1.100"/><path d="M1 3.500h8" stroke="#666" stroke-width="1"/></svg>
<div class="t" style="left:23px;top:687px;font-size:12.5px;color:#666">Data Source</div>
<div class="t" style="left:136px;top:687px;font-size:12.5px;color:#666">Map</div>
<div class="t" style="left:174px;top:686px;font-size:12.5px;color:#3a3a3a;-webkit-text-stroke:0.25px #3a3a3a">Sheet 2</div>
<div class="a" style="left:258px;top:678px;width:1px;height:29px;background:#d8d8d8"></div>
<div class="a" style="left:290px;top:678px;width:1px;height:29px;background:#d8d8d8"></div>
<div class="a" style="left:322px;top:678px;width:1px;height:29px;background:#d8d8d8"></div>
<svg class="a" style="left:234px;top:685px" width="18" height="17" viewBox="0 0 18 17"><rect x="1.500" y="1.500" width="10" height="10" fill="none" stroke="#666" stroke-width="1.100"/><path d="M4 10V7M6.500 10V4M9 10V6" stroke="#666" stroke-width="1.200"/><path d="M13 8.500v7M9.500 12h7" stroke="#333" stroke-width="1.600"/></svg>
<svg class="a" style="left:265px;top:685px" width="18" height="17" viewBox="0 0 18 17"><rect x="1" y="1" width="11" height="11" fill="none" stroke="#666" stroke-width="1.100"/><path d="M1 6h11M6.500 1v11" stroke="#666" stroke-width="1.100"/><path d="M13 8.500v7M9.500 12h7" stroke="#333" stroke-width="1.600"/></svg>
<svg class="a" style="left:297px;top:685px" width="18" height="17" viewBox="0 0 18 17"><path d="M1 2l5-1 0 10-5 1zM6 1l5 1v10l-5-1" fill="none" stroke="#666" stroke-width="1.100"/><path d="M13 8.500v7M9.500 12h7" stroke="#333" stroke-width="1.600"/></svg>
<div class="a" id="status" style="left:0;top:707px;width:994px;height:10px;background:#f0f0f0;border-top:1px solid #d8d8d8"></div>
<div class="t" style="left:3px;top:713px;font-size:11.5px;color:#3c3c3c">4 marks</div>
<div class="t" style="left:60px;top:713px;font-size:11.5px;color:#3c3c3c">1 row by 2 columns</div>
<div class="t" style="left:173px;top:713px;font-size:11.5px;color:#3c3c3c">% of Total SUM(Number of Records): 200.00%</div>
</body></html>
